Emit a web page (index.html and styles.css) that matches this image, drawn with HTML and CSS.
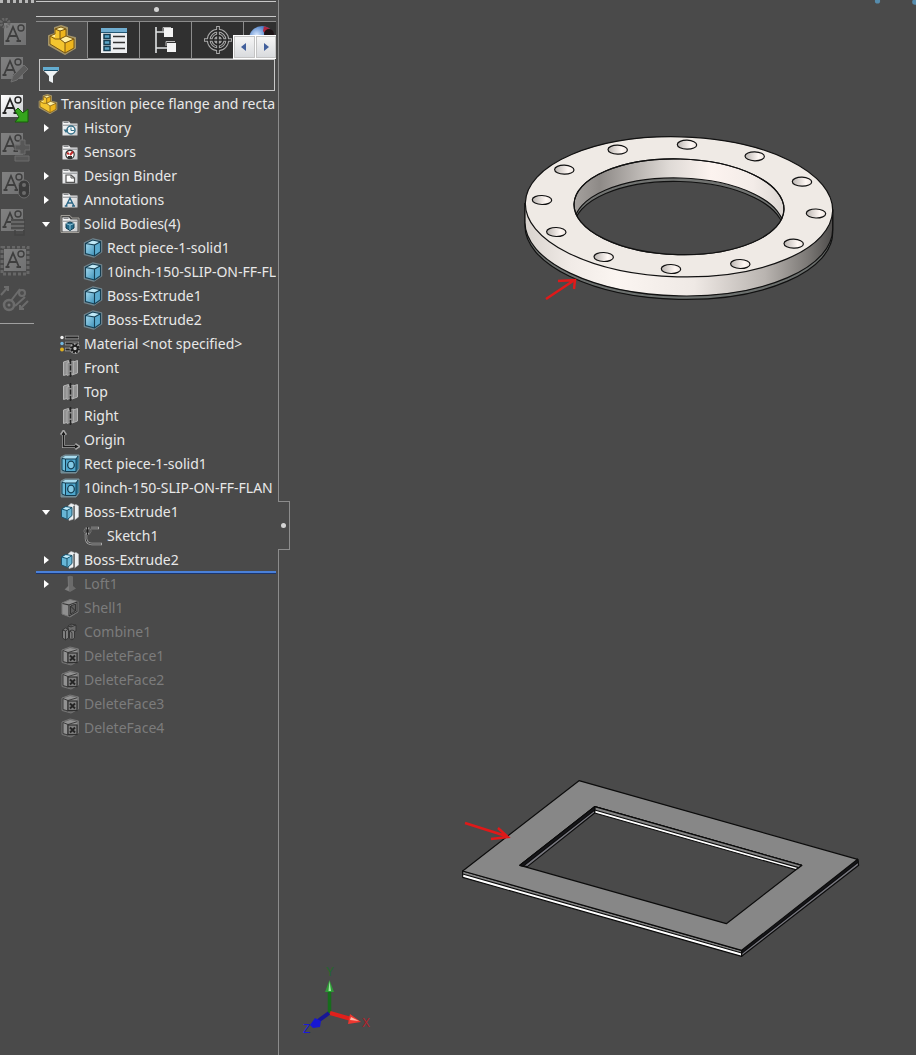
FILE: index.html
```
<!DOCTYPE html>
<html lang="en">
<head>
<meta charset="utf-8">
<title>Transition piece flange</title>
<link rel="stylesheet" href="styles.css">
</head>
<body>
<svg class="defs" aria-hidden="true">
  <defs>
    <linearGradient id="blue" x1="0" y1="0" x2="1" y2="1"><stop offset="0" stop-color="#a4daf0"/><stop offset="1" stop-color="#3d91b8"/></linearGradient>
    <linearGradient id="plate" x1="0" y1="0" x2="1" y2="1"><stop offset="0" stop-color="#fff"/><stop offset="1" stop-color="#c9cbce"/></linearGradient>
    <radialGradient id="ball" cx=".3" cy=".35" r=".8"><stop offset="0" stop-color="#d8e8ff"/><stop offset=".5" stop-color="#477bc4"/><stop offset="1" stop-color="#12264f"/></radialGradient>
    <symbol id="part" viewBox="0 0 28 30">
      <path d="M7 3 L13 1 L19 3 V11 L27 13 V23 L17 29 L1 20 V11 L7 9Z" fill="#9c8c58" stroke="#a59567" stroke-width="2" stroke-linejoin="round"/>
      <path d="M7 4 L12 6 V14 L17 18 V28 L2 19 V11 L7 9Z" fill="#f4c52f"/>
      <path d="M7 4 L13 2 L18 4 L12 6Z M12 14 L18 11 L26 14 L17 18Z M2 11 L7 9 V12Z" fill="#fff0a3"/>
      <path d="M12 6 L18 4 V11 L12 14Z M17 18 L26 14 V23 L17 28Z" fill="#eeb51d"/>
      <path d="M7 4 L12 6 V14 L17 18 V28 M12 6 L18 4 V11 M17 18 L26 14 M7 4 V9 L2 11 L7 14 L12 14 M2 11 V19 L17 28 L26 23 V14 L18 11 L12 14 M7 4 L13 2 L18 4" fill="none" stroke="#7a5610" stroke-width="1"/>
    </symbol>
    <symbol id="folder" viewBox="0 0 20 20">
      <path d="M2.500 17.500V3.500H9L10.500 5.500H17.500V17.500Z" fill="url(#plate)"/>
      <path d="M3.500 4.500H8.500M3 7.200H17" stroke="#84878a"/>
    </symbol>
    <symbol id="history" viewBox="0 0 20 20">
      <use href="#folder"/><circle cx="11" cy="12" r="4" fill="#f6f9fa" stroke="#356f87" stroke-width="1.500"/><path d="M3.500 11.500H8.500L6 15Z" fill="#356f87"/><path d="M11 9.500V12.500H14" fill="none" stroke="#356f87"/>
    </symbol>
    <symbol id="sensors" viewBox="0 0 20 20">
      <use href="#folder"/><circle cx="10" cy="12.500" r="4.200" fill="#fff" stroke="#333" stroke-width="1.200"/><path d="M10 13L13 9.500M7 11L9 12" stroke="#c32b2b" stroke-width="2"/><path d="M8 15H12" stroke="#333" stroke-width="2"/>
    </symbol>
    <symbol id="binder" viewBox="0 0 20 20">
      <use href="#folder"/><path d="M6 9H11L14.500 12V16.300H6Z" fill="#fff" stroke="#565656" stroke-width="1.200"/><path d="M11 9V12H14" fill="none" stroke="#565656"/>
    </symbol>
    <symbol id="annot" viewBox="0 0 20 20">
      <use href="#folder"/><path d="M6 16L10 8L14 16M7.500 13H12.500M4.800 16H7.500M12 16H15" fill="none" stroke="#2b6685" stroke-width="1.400"/>
    </symbol>
    <symbol id="bodies" viewBox="0 0 20 20">
      <path d="M1 18.500V1.500H10L12 4H19V18.500Z" fill="none" stroke="#a09d97"/>
      <use href="#folder"/><path d="M6 9.500L10 8L14 9.500V14L10 16.500L6 14Z" fill="#246a8a" stroke="#123c51"/><path d="M6 9.500L10 11L14 9.500M10 11V16" fill="none" stroke="#a9d9ea" stroke-width=".8"/>
    </symbol>
    <symbol id="cube" viewBox="0 0 20 20">
      <path d="M1.500 5L10 1L18.500 3V14L11 19L1.500 16.500Z" fill="#6b8791" stroke="#71858e" stroke-width="1.500" stroke-linejoin="round"/>
      <path d="M2.500 5.500L11.500 7V18L2.500 15.500Z" fill="url(#blue)"/><path d="M2.500 5.500L9.500 2L17.500 3.800L11.500 7Z" fill="#c0e8f6"/><path d="M11.500 7L17.500 3.800V13.800L11.500 18Z" fill="#5babcf"/>
      <path d="M2.500 5.500L9.500 2L17.500 3.800V13.800L11.500 18L2.500 15.500ZL11.500 7V18M11.500 7L17.500 3.800" fill="none" stroke="#163f53" stroke-width="1.100"/>
    </symbol>
    <symbol id="material" viewBox="0 0 20 20">
      <path d="M5 3.500H19M5 9.500H19M5 15.500H12" stroke="#aaa" stroke-width="3.600"/><path d="M5.500 3.500H18.500M5.500 9.500H18.500M5.500 15.500H12" stroke="#242424" stroke-width="2"/>
      <circle cx="2" cy="3.500" r="1.700" fill="#f1f1f1"/><circle cx="2" cy="9.500" r="1.700" fill="#72b9e2"/><circle cx="2" cy="15.500" r="1.900" fill="#e2b21d"/>
      <circle cx="15" cy="14.500" r="5.400" fill="#aaa"/><circle cx="15" cy="14.500" r="3.800" fill="none" stroke="#1d1d1d" stroke-width="2.400" stroke-dasharray="1.800 1.180"/><circle cx="15" cy="14.500" r="2.600" fill="#c8c8c8" stroke="#1d1d1d" stroke-width="1.800"/>
    </symbol>
    <symbol id="plane" viewBox="0 0 20 20">
      <path d="M3.500 4L8.500 2.500V16L3.500 17.500ZM12 4.500L17.500 2.500V15L12 17Z" fill="#929292" stroke="#b4b4b4"/>
      <path d="M7 5L13.500 3V15.500L7 17.500Z" fill="#8b8b8b" stroke="#b4b4b4" stroke-width=".8"/><path d="M10.500 1V19" stroke="#242424" stroke-width="1.500" stroke-dasharray="5 1.500"/>
    </symbol>
    <symbol id="origin" viewBox="0 0 20 20">
      <path d="M3.500 2V16.500H18M1.200 5L3.500 1.500L5.800 5M15 14.200L18.500 16.500L15 18.800" fill="none" stroke="#a6a6a6" stroke-width="3"/>
      <path d="M3.500 3V16.500H17" fill="none" stroke="#1b1b1b" stroke-width="1.500"/><path d="M1.500 5L3.500 1.500L5.500 5ZM15 14.500L18.500 16.500L15 18.500Z" fill="#1b1b1b"/>
    </symbol>
    <symbol id="import" viewBox="0 0 20 20">
      <path d="M1 3L5 1H19V15L16 19H1Z" fill="#6b8791" stroke="#78909a"/>
      <path d="M2 4.500L5.500 5V17.500L2 16Z" fill="#6dbcdb"/><path d="M2 4.500L5 2H18L16 5H5.500Z" fill="#a9dcef"/><path d="M5.500 5H16V17.500H5.500Z" fill="#4fa7cd"/><path d="M16 5L18.500 2V14.500L16 17.500Z" fill="#27708f"/>
      <path d="M2 4.500L5.500 5H16L18 2M5.500 5V17.500H16V5M2 4.500V16L5.500 17.500" fill="none" stroke="#143c50"/><ellipse cx="11" cy="11" rx="3.300" ry="3.800" fill="#83c9e4" stroke="#143c50" stroke-width="1.300"/>
    </symbol>
    <symbol id="extrude" viewBox="0 0 20 20">
      <path d="M8 4L11 1.500L14 2.500V17L9 18.500ZM14.500 3L16 2.500L18.500 4V15L14.500 18Z" fill="#eceff1" stroke="#bfc3c6" stroke-width=".6"/><path d="M14 4V18" stroke="#333"/>
      <path d="M1.500 7L5.500 4.500L12 5.500V13.500L7.500 17.500L1.500 15Z" fill="#67b6d6" stroke="#1a5069"/><path d="M1.500 7L7 8.500V17M7 8.500L12 5.500" fill="none" stroke="#1a5069"/><path d="M3 6.800L5.800 5.200L10.500 6L7 7.800Z" fill="#c8ecf8"/>
    </symbol>
    <symbol id="sketch" viewBox="0 0 20 20">
      <path d="M8 2H16M3 8V13Q4 18 9 18H19" fill="none" stroke="#aaa" stroke-width="2.400"/><path d="M8 2H15M3 8V13Q4 18 9 18H18" fill="none" stroke="#373737"/>
      <path d="M4.500 1V9M.5 5H8.500M1.700 2.200L7.300 7.800M7.300 2.200L1.700 7.800" stroke="#999" stroke-width="2"/><path d="M4.500 1V9M.5 5H8.500M1.700 2.200L7.300 7.800M7.300 2.200L1.700 7.800" stroke="#222"/>
    </symbol>
    <symbol id="loft" viewBox="0 0 20 20"><path d="M7.500 2.500Q10 1 13 2.500V12L16 14.500L10 18L4.500 15.500L8 12Z" fill="#6b6b6b"/><path d="M8.500 3V12L5 15.500L9 17V3" fill="#7d7d7d"/></symbol>
    <symbol id="shell" viewBox="0 0 20 20"><path d="M2 5L10 1.500L18 3.500V14L10 19L2 16Z" fill="#8f8f8f" stroke="#777"/><path d="M2.500 5.500L9 7V18M9 7L17 4V13.500L9 18" fill="none" stroke="#353535" stroke-width="1.200"/><path d="M10.500 8L15.500 6V13L10.500 16Z" fill="#5c5c5c" stroke="#353535"/><path d="M10.500 8L15.500 13" stroke="#2c2c2c"/></symbol>
    <symbol id="combine" viewBox="0 0 20 20"><path d="M8 4L11 2L16 3V9L14 10H8Z" fill="#6c6c6c" stroke="#363636"/><path d="M2.500 8L5.500 6L8.500 7V16L5.500 18L2.500 16ZM9.500 9L12 8L14.500 9V16L12 18L9.500 16.500Z" fill="#7e7e7e" stroke="#363636"/><path d="M2.500 8L5.500 9V18M5.500 9L8.500 7M9.500 9L12 10.500V18M11 5V2.500M8 4L11 5L16 3" fill="none" stroke="#363636"/></symbol>
    <symbol id="delface" viewBox="0 0 20 20"><path d="M2 4L10 1L18.500 3V15L11 19L2 16.500Z" fill="#626262" stroke="#757575"/><path d="M3 4.500L10 2L17.500 3.500V7H8V17L3 15.500Z" fill="#929292"/><path d="M3 4.500L8 6.500L17 3.800M3 4.500V15.500L8 17V6.500" fill="none" stroke="#3b3b3b"/><rect x="8" y="7" width="9" height="9.500" fill="#808080" stroke="#303030" stroke-width="1.200"/><path d="M10 9.500L15 14.500M15 9.500L10 14.500" stroke="#252525" stroke-width="2"/></symbol>
    <symbol id="note" viewBox="0 0 30 30">
      <rect x="1" y="3" width="22" height="22" fill="url(#plate)"/><path d="M4 21L10 7L16 21M6 16H14M2.500 21H6.500M13.500 21H18" fill="none" stroke="#242424" stroke-width="1.800"/><circle cx="18" cy="8" r="3" fill="none" stroke="#242424" stroke-width="1.400"/>
    </symbol>
  </defs>
</svg>
<div class="app">
  <nav class="tools" aria-label="Annotation tools">
    <button class="tool off" aria-label="New style"><svg viewBox="0 0 30 30"><use href="#note" x="3" y="2"/><circle cx="5" cy="5" r="4" fill="none" stroke="#aaa" stroke-width="3" stroke-dasharray="2 1.140"/></svg></button>
    <button class="tool off" aria-label="Edit style"><svg viewBox="0 0 30 30"><use href="#note" y="-2"/><path d="M11 26L13 20L24 9L28 13L17 24Z" fill="#888" stroke="#c4c4c4"/></svg></button>
    <button class="tool" aria-label="Apply style"><svg viewBox="0 0 30 30"><use href="#note" y="-2"/><path d="M15 17L18 14L23 19L28 15V28H15L19 23Z" fill="#35a51d" stroke="#176009"/></svg></button>
    <button class="tool off" aria-label="Add style"><svg viewBox="0 0 30 30"><use href="#note" y="-2"/><path d="M15 13H20V8H25V13H30V18H25V22H20V18H15ZM15 24H29V29H15Z" fill="#777" stroke="#bbb"/></svg></button>
    <button class="tool off" aria-label="Link style"><svg viewBox="0 0 30 30"><use href="#note" x="1" y="-1"/><rect x="18.500" y="10" width="11" height="18" rx="5.500" fill="#1c1c1c" stroke="#bbb"/><circle cx="24" cy="15" r="2" fill="#bbb"/><circle cx="24" cy="23" r="2" fill="#bbb"/></svg></button>
    <button class="tool off" aria-label="Save style"><svg viewBox="0 0 30 30"><use href="#note" y="-2"/><path d="M11 11H24V22H11Z" fill="#aaa"/><path d="M11 12H25M11 16H25M11 20H25M15 22V27H24V22" fill="none" stroke="#333" stroke-width="1.500"/></svg></button>
    <button class="tool off" aria-label="Stamp"><svg viewBox="0 0 30 30"><rect x="2" y="1" width="26" height="27" fill="none" stroke="#aaa" stroke-width="3" stroke-dasharray="3 2"/><use href="#note" x="3"/></svg></button>
    <button class="tool off" aria-label="Belt and chain"><svg viewBox="0 0 30 30"><path d="M1 11L8 3M4 3H8V7M10 18L20 5M15 22L25 13M28 17L20 25M20 21V25H24" fill="none" stroke="#bbb" stroke-width="2"/><circle cx="9" cy="21" r="5" fill="#555" stroke="#bbb" stroke-width="2.500"/><circle cx="22" cy="9" r="3" fill="#555" stroke="#bbb" stroke-width="2"/><circle cx="9" cy="21" r="1.500" fill="#ddd"/></svg></button>
  </nav>
  <aside class="panel">
    <div class="grip"><span class="dot"></span></div>
    <div class="tabs">
      <button class="tab active" aria-label="Feature tree"><svg class="ticon" viewBox="0 0 28 30"><use href="#part"/></svg></button>
      <button class="tab" aria-label="Properties"><svg class="ticon" viewBox="0 0 28 28"><rect x="1" y="2" width="26" height="25" fill="#eceef0"/><rect x="1" y="2" width="26" height="4" fill="#70add0"/><path d="M1 6.500H27" stroke="#235874"/><path d="M4 8.500H10V12.500H4ZM4 14.500H10V18.500H4ZM4 20.500H10V24.500H4Z" fill="#5aa5c7" stroke="#153c50" stroke-width="1.500"/><path d="M13 10.500H25M13 16.500H25M13 22.500H25" stroke="#333" stroke-width="1.300"/></svg></button>
      <button class="tab" aria-label="Configurations"><svg class="ticon" viewBox="0 0 28 28"><path d="M4 1V27M4 6H12M4 22H15" stroke="#dfe2e3" stroke-width="1.600"/><rect x="12" y="2" width="9" height="9" fill="#f3f3f3"/><rect x="15" y="17" width="9" height="9" fill="#f3f3f3"/><path d="M11 5V1.500H19M14 20V15.500H23" fill="none" stroke="#bbb"/></svg></button>
      <button class="tab" aria-label="Dimensions"><svg class="ticon" viewBox="0 0 30 30"><g fill="none" stroke="#a9a9a9" stroke-width="4"><circle cx="15" cy="15" r="10"/><circle cx="15" cy="15" r="5"/><path d="M15 0V30M0 15H30"/></g><g fill="none" stroke="#252525" stroke-width="1.800"><circle cx="15" cy="15" r="10"/><circle cx="15" cy="15" r="5"/><path d="M15 1V29M1 15H29"/></g></svg></button>
      <button class="tab" aria-label="Display"><svg class="ticon" viewBox="0 0 28 28"><circle cx="14" cy="14" r="13" fill="url(#ball)"/><path d="M16 1.200A13 13 0 0 1 27 14L20 14L15 6Z" fill="#b0263c"/><ellipse cx="21" cy="9" rx="5" ry="5" fill="#1c1416"/></svg></button>
      <div class="scroll">
        <button class="arrow" aria-label="Previous tabs"><svg viewBox="0 0 6 8"><path d="M5 0V8L0 4Z" fill="#415f9c"/></svg></button>
        <button class="arrow" aria-label="Next tabs"><svg viewBox="0 0 6 8"><path d="M1 0V8L6 4Z" fill="#415f9c"/></svg></button>
      </div>
    </div>
    <label class="filter">
      <svg class="funnel" viewBox="0 0 16 18"><path d="M0 1H16V4L10 10V17L6 15V10L0 4Z" fill="#eef2f4"/><path d="M0 1H16V4H0Z" fill="#63acd0"/><path d="M1 4.500H15" stroke="#1c506b"/></svg>
      <input class="query" type="text" aria-label="Filter tree">
    </label>
    <ul class="tree">
      <li class="row root"><svg class="icon"><use href="#part"/></svg><span>Transition piece flange and recta</span></li>
      <li class="row"><button class="exp closed" aria-label="Expand History"></button><svg class="icon"><use href="#history"/></svg><span>History</span></li>
      <li class="row leaf"><svg class="icon"><use href="#sensors"/></svg><span>Sensors</span></li>
      <li class="row"><button class="exp closed" aria-label="Expand Design Binder"></button><svg class="icon"><use href="#binder"/></svg><span>Design Binder</span></li>
      <li class="row"><button class="exp closed" aria-label="Expand Annotations"></button><svg class="icon"><use href="#annot"/></svg><span>Annotations</span></li>
      <li class="row"><button class="exp open" aria-label="Collapse Solid Bodies"></button><svg class="icon"><use href="#bodies"/></svg><span>Solid Bodies(4)</span></li>
      <li class="row child"><svg class="icon"><use href="#cube"/></svg><span>Rect piece-1-solid1</span></li>
      <li class="row child"><svg class="icon"><use href="#cube"/></svg><span>10inch-150-SLIP-ON-FF-FL</span></li>
      <li class="row child"><svg class="icon"><use href="#cube"/></svg><span>Boss-Extrude1</span></li>
      <li class="row child"><svg class="icon"><use href="#cube"/></svg><span>Boss-Extrude2</span></li>
      <li class="row leaf"><svg class="icon"><use href="#material"/></svg><span>Material &lt;not specified&gt;</span></li>
      <li class="row leaf"><svg class="icon"><use href="#plane"/></svg><span>Front</span></li>
      <li class="row leaf"><svg class="icon"><use href="#plane"/></svg><span>Top</span></li>
      <li class="row leaf"><svg class="icon"><use href="#plane"/></svg><span>Right</span></li>
      <li class="row leaf"><svg class="icon"><use href="#origin"/></svg><span>Origin</span></li>
      <li class="row leaf"><svg class="icon"><use href="#import"/></svg><span>Rect piece-1-solid1</span></li>
      <li class="row leaf"><svg class="icon"><use href="#import"/></svg><span>10inch-150-SLIP-ON-FF-FLAN</span></li>
      <li class="row"><button class="exp open" aria-label="Collapse Boss-Extrude1"></button><svg class="icon"><use href="#extrude"/></svg><span>Boss-Extrude1</span></li>
      <li class="row child"><svg class="icon"><use href="#sketch"/></svg><span>Sketch1</span></li>
      <li class="row"><button class="exp closed" aria-label="Expand Boss-Extrude2"></button><svg class="icon"><use href="#extrude"/></svg><span>Boss-Extrude2</span></li>
      <li class="rollback" role="separator"></li>
      <li class="row dim"><button class="exp closed" aria-label="Expand Loft1"></button><svg class="icon"><use href="#loft"/></svg><span>Loft1</span></li>
      <li class="row leaf dim"><svg class="icon"><use href="#shell"/></svg><span>Shell1</span></li>
      <li class="row leaf dim"><svg class="icon"><use href="#combine"/></svg><span>Combine1</span></li>
      <li class="row leaf dim"><svg class="icon"><use href="#delface"/></svg><span>DeleteFace1</span></li>
      <li class="row leaf dim"><svg class="icon"><use href="#delface"/></svg><span>DeleteFace2</span></li>
      <li class="row leaf dim"><svg class="icon"><use href="#delface"/></svg><span>DeleteFace3</span></li>
      <li class="row leaf dim"><svg class="icon"><use href="#delface"/></svg><span>DeleteFace4</span></li>
    </ul>
  </aside>
  <main class="view">
    <button class="handle" aria-label="Collapse panel"><span class="dot"></span></button>
    <svg class="model" viewBox="279 0 637 1055" role="img" aria-label="Flange and rectangular frame">
      <defs>
        <linearGradient id="side"><stop offset="0" stop-color="#d8d3ce"/><stop offset=".15" stop-color="#f1ebe7"/><stop offset=".3" stop-color="#fbf5f1"/><stop offset=".55" stop-color="#efe9e5"/><stop offset=".78" stop-color="#b9b4b0"/><stop offset=".92" stop-color="#7b7875"/><stop offset="1" stop-color="#4e4c4b"/></linearGradient>
        <linearGradient id="bore"><stop offset="0" stop-color="#a5a19e"/><stop offset=".12" stop-color="#8e8a87"/><stop offset=".45" stop-color="#dfdad6"/><stop offset=".65" stop-color="#fcf3ef"/><stop offset=".85" stop-color="#f3ece8"/><stop offset="1" stop-color="#dcd7d3"/></linearGradient>
        <linearGradient id="hole"><stop offset="0" stop-color="#bbb6b2"/><stop offset=".7" stop-color="#fff8f4"/><stop offset="1" stop-color="#eee7e2"/></linearGradient>
        <ellipse id="bolt" rx="9.700" ry="4.500" transform="rotate(1.500)" fill="url(#hole)" stroke="#111" stroke-width="1.200"/>
        <ellipse id="inner" cx="679" cy="206.800" rx="105" ry="47.800" transform="rotate(1.500 679 206.800)"/>
        <clipPath id="boreclip"><use href="#inner"/></clipPath>
      </defs>
      <g stroke="#111" stroke-width="1.200">
        <path d="M525 203.600V226A153.700 70 1.500 0 0 832.700 232.500V210Z" fill="#6c706e"/>
        <path d="M525 203.600V222.600A153.700 70 1.500 0 0 832.700 229V210Z" fill="url(#side)"/>
        <ellipse cx="679" cy="206.800" rx="153.700" ry="70" transform="rotate(1.500 679 206.800)" fill="#efeae5"/>
        <use href="#inner" fill="url(#bore)"/>
        <g clip-path="url(#boreclip)"><use href="#inner" y="19" fill="#727472"/><use href="#inner" y="22.500" fill="#4a4a4a"/></g>
        <use href="#inner" fill="none"/>
      </g>
      <use href="#bolt" x="687" y="144.700"/><use href="#bolt" x="754.700" y="156.300"/><use href="#bolt" x="802" y="181.700"/><use href="#bolt" x="816" y="213.500"/><use href="#bolt" x="793.700" y="243.700"/><use href="#bolt" x="740.300" y="264"/><use href="#bolt" x="671" y="269"/><use href="#bolt" x="603.700" y="257"/><use href="#bolt" x="556.300" y="232"/><use href="#bolt" x="542" y="200"/><use href="#bolt" x="564.300" y="169.700"/><use href="#bolt" x="617.700" y="149.700"/>
      <path d="M546 299L573 281M558 281L575 280L574 289" fill="none" stroke="#e01919" stroke-width="2.400"/>
      <g transform="translate(450 770) scale(.333333)" stroke="#0c0c0c" stroke-width="3.500" stroke-linejoin="round">
        <path d="M38 303L875 541V559L38 322Z" fill="#fff"/>
        <path d="M38 303L875 541V549L38 312Z" fill="#858585"/>
        <path d="M875 541L1223 268L1226 286L875 559Z" fill="#77777f"/>
        <path d="M875 541L1223 268L1225 276L875 550Z" fill="#17171b"/>
        <path fill-rule="evenodd" d="M387 32L1223 268L875 541L38 303ZM434 110L210 286L829 461L1055 286Z" fill="#878787"/>
        <path d="M434 110L1055 286L1037 299L434 129Z" fill="#fff"/>
        <path d="M434 110L1055 286L1046 293L434 120Z" fill="#858585"/>
        <path d="M434 110L210 286L232 290L434 129Z" fill="#77777f"/>
        <path d="M434 110L210 286L220 288L434 120Z" fill="#17171b"/>
      </g>
      <path d="M465 823L506 836M498 828L508 837L491 839" fill="none" stroke="#e01919" stroke-width="2.400"/>
      <g>
        <path d="M329.500 1013V989" stroke="#176d1c" stroke-width="3.500"/><path d="M325 992L329.500 980L334 992Z" fill="#2f9c37"/><path d="M328.500 991L329.500 981L331 991Z" fill="#a6e3a8"/>
        <path d="M330 1013L351 1019" stroke="#e0201c" stroke-width="4"/><path d="M350 1014L361 1022L348 1024Z" fill="#ee3730"/><path d="M351 1017L359 1021L350 1020Z" fill="#ffb5a5"/>
        <path d="M329 1013L318 1021" stroke="#171796" stroke-width="4"/><path d="M310 1025L315 1018L321 1021L320 1027L313 1028Z" fill="#1717d2"/>
        <text class="axis" x="326" y="976" fill="#23692a">Y</text><text class="axis" x="362" y="1027" fill="#b3222b">X</text><text class="axis" x="303" y="1033" fill="#1a1ad8">Z</text>
      </g>
      <circle cx="877.500" cy="1" r="2.600" fill="#568cad"/><circle cx="915" cy="2" r="2.800" fill="#568cad"/>
    </svg>
  </main>
</div>
</body>
</html>
```
FILE: styles.css
```
* { box-sizing: border-box; }
body { margin: 0; background: #4a4a4a; color: #e8e8e8; font: 14px/24px "Noto Sans", "Open Sans", sans-serif; }
button { padding: 0; border: 0; background: none; }
.defs { position: absolute; width: 0; height: 0; }
.app { display: flex; min-height: 100vh; }

.tools { display: flex; flex-direction: column; gap: 8px; flex: 0 0 34px; align-self: flex-start; margin-right: 2px; padding: 15px 0 9px; border-top: 3px dotted #b8b8b8; border-bottom: 1px solid #a0a0a0; }
.tool { width: 30px; height: 30px; }
.tool svg { display: block; width: 30px; height: 30px; }
.off { opacity: .3; }

.panel { flex: 0 0 240px; overflow: hidden; }
.grip { display: flex; align-items: center; justify-content: center; height: 16px; margin-top: 1px; border-top: 1px solid #c8c8c8; border-bottom: 1px solid #c8c8c8; }
.dot { display: block; width: 5px; height: 5px; border-radius: 50%; background: #d4d4d4; }
.tabs { position: relative; display: flex; height: 38px; margin-top: 4px; border-top: 1px solid #8c8c8c; overflow: hidden; }
.tab { display: flex; align-items: center; justify-content: center; flex: 0 0 52px; border-right: 1px solid #8c8c8c; border-bottom: 1px solid #8c8c8c; background: #303030; }
.tab.active { background: #4a4a4a; border-bottom-color: #4a4a4a; }
.ticon { width: 28px; height: 30px; }
.tab:nth-child(5) { align-items: flex-start; justify-content: flex-start; padding: 2px 0 0 4px; }
.scroll { position: absolute; right: 0; bottom: 0; display: flex; gap: 1px; width: 43px; height: 24px; padding: 1px 0 1px 1px; background: #fff; }
.arrow { display: flex; align-items: center; justify-content: center; flex: 1; background: linear-gradient(#f5f5f5, #d9dbde); border: 1px solid #c4c4c4; }
.arrow svg { width: 6px; height: 8px; }
.filter { display: flex; align-items: center; gap: 6px; height: 32px; margin: 0 1px 0 3px; padding: 0 3px; border: 1px solid #c8c8c8; }
.funnel { flex: none; width: 16px; height: 18px; }
.query { flex: 1; min-width: 0; height: 24px; border: 0; background: transparent; color: inherit; font: inherit; outline: 0; }

.tree { margin: 1px 0 0; padding: 0; list-style: none; }
.row { display: flex; align-items: center; gap: 4px; height: 24px; white-space: nowrap; }
.root { padding-left: 2px; gap: 3px; }
.leaf { padding-left: 24px; }
.child { padding-left: 47px; }
.dim { color: #7c7c7c; }
.icon { flex: none; width: 20px; height: 20px; }
.exp { display: flex; flex: 0 0 20px; height: 20px; padding-left: 8px; align-items: center; }
.exp::before { content: ""; border: 4px solid transparent; }
.closed::before { border-left: 5px solid #fff; border-right: 0; }
.open { padding-left: 6px; }
.open::before { border-top: 5px solid #fff; border-bottom: 0; }
.rollback { height: 3px; margin: -1px 0 -2px; background: #4a80d8; border-bottom: 1px solid #19356f; }

.view { position: relative; flex: 1; min-width: 0; margin-left: 2px; border-left: 1px solid #8c8c8c; }
.model { display: block; width: 100%; height: auto; }
.handle { position: absolute; left: -1px; top: 501px; display: flex; align-items: center; justify-content: center; width: 12px; height: 49px; border: 1px solid #8c8c8c; border-left: 0; background: #4a4a4a; }
.axis { font: 12px "Liberation Sans", sans-serif; }
```
